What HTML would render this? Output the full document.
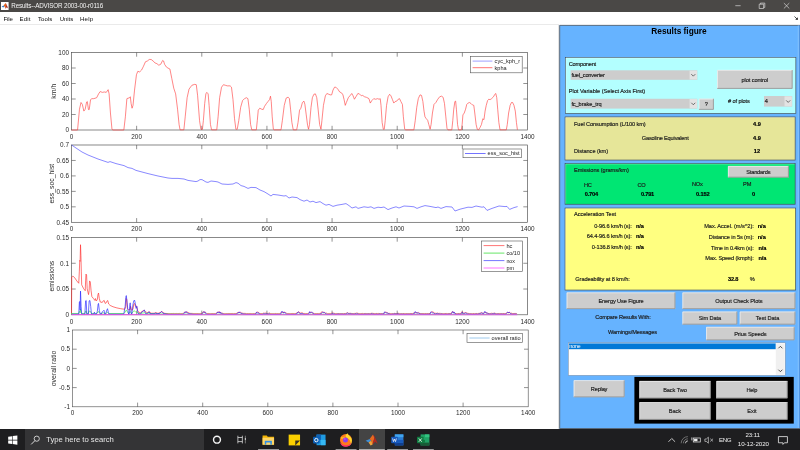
<!DOCTYPE html><html><head><meta charset="utf-8"><title>Results--ADVISOR 2003-00-r0116</title><style>
html,body{margin:0;padding:0}
body{width:800px;height:450px;position:relative;overflow:hidden;background:#fff;font-family:"Liberation Sans", sans-serif;}
#root{position:absolute;left:0;top:0;width:800px;height:450px;overflow:hidden;will-change:transform}
.abs{position:absolute;box-sizing:border-box}
.t{position:absolute;white-space:pre;line-height:1}
.k{-webkit-text-stroke:0.16px currentColor}
#titlebar{left:0;top:0;width:800px;height:11.6px;background:#4a4846}
#menubar{left:0;top:11.6px;width:800px;height:13.4px;background:#fff}
.sub{border:1px solid #5f7f9f;box-shadow:inset 0.6px 0.6px 0 rgba(255,255,255,.55)}
.btn{background:#cfcfcf;border:0.8px solid;border-color:#f4f4f4 #8a8a8a #8a8a8a #f4f4f4;}
.pop{background:#cfcfcf;}
.pop i{position:absolute;right:0;top:0;bottom:0;width:7.6px;background:#e1e1e1}
#taskbar{left:0;top:429px;width:800px;height:21px;background:#1e1e20}
</style></head><body><div id="root">
<div id="titlebar" class="abs"></div>
<div id="menubar" class="abs"></div>
<svg id="plots" width="559" height="404" viewBox="0 25 559 404" style="position:absolute;left:0;top:25px;font-family:'Liberation Sans', sans-serif;font-size:6.4px;fill:#2a2a2a"><rect x="71.5" y="52.5" width="456.0" height="77.5" fill="#fff" stroke="#4a4a4a" stroke-width="0.65"/><path d="M136.64 130v-4.2M136.64 52.5v4.2M201.79 130v-4.2M201.79 52.5v4.2M266.93 130v-4.2M266.93 52.5v4.2M332.07 130v-4.2M332.07 52.5v4.2M397.21 130v-4.2M397.21 52.5v4.2M462.36 130v-4.2M462.36 52.5v4.2M71.5 68h4.2M527.5 68h-4.2M71.5 83.5h4.2M527.5 83.5h-4.2M71.5 99h4.2M527.5 99h-4.2M71.5 114.5h4.2M527.5 114.5h-4.2" stroke="#4a4a4a" stroke-width="0.6" fill="none"/><text x="71.5" y="138.75" text-anchor="middle">0</text><text x="136.64" y="138.75" text-anchor="middle">200</text><text x="201.79" y="138.75" text-anchor="middle">400</text><text x="266.93" y="138.75" text-anchor="middle">600</text><text x="332.07" y="138.75" text-anchor="middle">800</text><text x="397.21" y="138.75" text-anchor="middle">1000</text><text x="462.36" y="138.75" text-anchor="middle">1200</text><text x="527.5" y="138.75" text-anchor="middle">1400</text><text x="69" y="54.75" text-anchor="end">100</text><text x="69" y="70.25" text-anchor="end">80</text><text x="69" y="85.75" text-anchor="end">60</text><text x="69" y="101.25" text-anchor="end">40</text><text x="69" y="116.75" text-anchor="end">20</text><text x="69" y="132.25" text-anchor="end">0</text><text transform="translate(55.6 91.25) rotate(-90)" text-anchor="middle" style="font-size:6.9px">km/h</text><path d="M71.44 130.03 L77.56 130.03 L79.47 109.19 L81 102.49 L82.34 104.41 L83.87 111.1 L85.21 109.19 L86.55 102.11 L87.31 101.54 L88.46 109.57 L89.22 109.57 L90.56 99.63 L91.9 98.67 L93.81 98.67 L96.68 97.71 L98.59 93.89 L100.12 91.59 L102.42 92.36 L104.33 91.98 L106.24 92.36 L108.15 89.68 L109.11 93.89 L110.45 113.01 L111.98 129.26 L112.93 130.03 L123.83 130.03 L125.36 116.83 L126.89 98.67 L128.23 98.1 L129.19 98.1 L130.33 96.76 L131.1 103.45 L132.05 108.23 L133.01 105.36 L134.54 90.07 L136.45 74.77 L137.79 71.33 L139.7 71.9 L141.61 69.99 L143.53 66.16 L145.44 61.77 L147.35 61 L149.26 59.47 L151.17 59.47 L153.09 61 L155 62.91 L156.91 63.68 L158.82 65.21 L160.73 64.25 L162.65 60.43 L163.6 61 L164.56 64.25 L166.47 67.12 L168 68.08 L169.91 69.03 L171.82 78.59 L173.74 88.15 L175.65 93.89 L177.56 109.19 L179.09 124.48 L180.05 129.84 L183.87 129.84 L185.21 116.83 L187.12 97.71 L189.03 89.11 L191.9 85.28 L194.77 84.33 L196.3 84.71 L197.64 95.8 L199.55 120.66 L200.89 129.26 L202.42 129.26 L203.37 120.66 L204.71 103.45 L205.86 93.89 L206.81 92.36 L208.15 93.89 L209.11 105.36 L210.45 124.48 L211.59 129.84 L216.76 129.84 L218.1 116.83 L219.63 97.71 L221.54 87.2 L223.45 84.71 L225.36 85.28 L227.27 85.86 L230.14 85.86 L231.48 87.2 L233.01 99.63 L234.54 118.75 L235.88 129.26 L237.22 129.26 L238.75 120.66 L240.66 107.27 L242.57 100.58 L244.48 98.67 L246.39 97.71 L247.92 98.67 L249.26 109.19 L250.6 124.48 L251.75 129.84 L256.34 129.84 L257.29 120.66 L258.25 110.14 L259.78 108.23 L261.69 109.19 L263.22 109.57 L264.56 106.32 L266.47 103.45 L268 101.54 L269.53 99.63 L270.49 96.18 L271.25 101.54 L272.21 116.83 L273.35 129.26 L274.12 129.84 L281 129.84 L282.34 120.66 L284.25 105.36 L286.16 98.1 L288.08 97.14 L289.41 98.67 L290.56 109.19 L291.9 122.57 L293.24 129.84 L296.68 129.84 L298.02 122.57 L299.55 110.14 L300.89 108.23 L302.42 102.49 L303.95 101.15 L304.9 104.41 L306.24 114.92 L307.58 125.44 L308.54 129.26 L309.49 124.48 L311.02 107.27 L312.36 97.71 L313.89 94.27 L315.42 93.89 L316.76 97.71 L318.1 109.19 L319.63 124.48 L320.96 129.26 L321.92 120.66 L323.45 105.36 L325.36 95.8 L326.89 93.51 L328.8 94.27 L330.14 94.85 L331.67 94.85 L333.01 90.07 L334.54 87.2 L335.88 87.2 L337.79 89.11 L339.7 91.98 L341.61 92.93 L342.95 94.85 L344.1 99.63 L345.25 105.36 L346.39 102.49 L348.31 97.71 L350.22 95.42 L351.75 93.51 L353.09 95.8 L354.42 99.24 L355.95 96.76 L357.87 93.51 L359.4 93.89 L361.31 95.8 L362.65 95.42 L364.56 96.76 L366.47 97.33 L368 98.1 L368.96 98.67 L370.29 103.07 L371.82 100.58 L373.74 98.67 L375.65 99.24 L377.56 98.67 L379.09 99.24 L380.24 98.67 L381 105.36 L382.15 122.57 L383.3 129.26 L384.25 129.26 L385.21 120.66 L386.55 105.36 L388.08 96.76 L389.61 94.27 L390.94 95.8 L392.47 99.63 L393.81 103.07 L395.15 101.54 L396.68 101.15 L398.21 99.24 L399.55 98.67 L400.89 101.54 L402.42 104.41 L403.37 116.83 L404.71 129.26 L405.67 129.84 L413.89 129.84 L415.23 120.66 L416.76 107.27 L418.29 98.67 L420.01 94.85 L421.54 95.42 L422.88 101.54 L424.02 111.1 L424.98 116.83 L426.32 118.75 L427.66 120.28 L428.8 124.48 L430.14 129.26 L431.1 124.48 L432.44 113.01 L433.97 104.41 L435.88 102.49 L437.79 99.24 L439.7 96.76 L441.61 96.18 L443.14 97.33 L444.48 103.45 L445.82 116.83 L446.97 128.31 L447.92 129.84 L448 129.84 L451.82 129.84 L452.78 120.66 L453.74 109.19 L454.88 101.54 L455.65 101.15 L456.41 109.19 L457.56 124.48 L458.52 129.84 L461.38 129.84 L462.15 124.48 L462.91 114.92 L464.25 113.01 L465.59 109.19 L466.74 104.41 L468.08 103.07 L469.41 102.49 L470.94 103.45 L472.47 104.98 L473.81 105.36 L474.77 113.01 L476.11 124.48 L477.25 129.26 L478.59 129.84 L480.12 127.35 L481.46 124.48 L482.8 118.75 L483.95 119.7 L485.09 111.1 L486.24 105.36 L487.58 100.58 L488.73 99.24 L490.07 99.63 L491.59 98.67 L493.51 96.76 L494.85 94.27 L495.8 93.51 L496.76 97.71 L497.71 109.19 L498.86 122.57 L500.01 129.84 L506.32 129.84 L507.27 124.48 L508.61 113.01 L510.14 105.36 L511.48 102.49 L512.63 102.49 L513.97 105.36 L515.3 111.1 L516.45 122.57 L517.41 129.84" stroke="#ff3b3b" stroke-width="0.62" fill="none" stroke-linejoin="round"/><rect x="470.4" y="56.3" width="51.8" height="16.5" fill="#fff" stroke="#555" stroke-width="0.6"/><path d="M472.6 61.1H492.4" stroke="#8888ff" stroke-width="0.8"/><text x="494.6" y="63.05" textLength="25.4" lengthAdjust="spacingAndGlyphs" style="font-size:5.75px;fill:#1c1c1c">cyc_kph_r</text><path d="M472.6 67.7H492.4" stroke="#ff5050" stroke-width="0.8"/><text x="494.6" y="69.65" textLength="12" lengthAdjust="spacingAndGlyphs" style="font-size:5.75px;fill:#1c1c1c">kpha</text><rect x="71.5" y="145" width="456.0" height="77.3" fill="#fff" stroke="#4a4a4a" stroke-width="0.65"/><path d="M136.64 222.3v-4.2M136.64 145v4.2M201.79 222.3v-4.2M201.79 145v4.2M266.93 222.3v-4.2M266.93 145v4.2M332.07 222.3v-4.2M332.07 145v4.2M397.21 222.3v-4.2M397.21 145v4.2M462.36 222.3v-4.2M462.36 145v4.2M71.5 160.46h4.2M527.5 160.46h-4.2M71.5 175.92h4.2M527.5 175.92h-4.2M71.5 191.38h4.2M527.5 191.38h-4.2M71.5 206.84h4.2M527.5 206.84h-4.2" stroke="#4a4a4a" stroke-width="0.6" fill="none"/><text x="71.5" y="231.05" text-anchor="middle">0</text><text x="136.64" y="231.05" text-anchor="middle">200</text><text x="201.79" y="231.05" text-anchor="middle">400</text><text x="266.93" y="231.05" text-anchor="middle">600</text><text x="332.07" y="231.05" text-anchor="middle">800</text><text x="397.21" y="231.05" text-anchor="middle">1000</text><text x="462.36" y="231.05" text-anchor="middle">1200</text><text x="527.5" y="231.05" text-anchor="middle">1400</text><text x="69" y="147.25" text-anchor="end">0.7</text><text x="69" y="162.71" text-anchor="end">0.65</text><text x="69" y="178.17" text-anchor="end">0.6</text><text x="69" y="193.63" text-anchor="end">0.55</text><text x="69" y="209.09" text-anchor="end">0.5</text><text x="69" y="224.55" text-anchor="end">0.45</text><text transform="translate(53.9 183.65) rotate(-90)" text-anchor="middle" style="font-size:6.9px">ess_soc_hist</text><path d="M71.6 145 L76 148 L82 152 L88 155 L98 159 L108 162.4 L110 161.6 L116 163.6 L124 165.6 L128 167.6 L132 168.4 L136 170.4 L148 173.6 L158 176 L168 178 L172 178.4 L178 178.4 L184 179 L188 180.4 L196 181.6 L198 181 L200 179.6 L202 179.6 L206 182 L208 182.4 L211 181 L216 181.6 L218 182 L222 184 L228 184.4 L233 184 L236 182.6 L238 183.2 L241 185.6 L244 186.4 L248 188.4 L251 187.4 L256 187.6 L260 190 L264 191.6 L268 194 L271 196 L273 194.4 L278 195 L284 196 L286 195.6 L289 198 L292 197 L297 197.6 L300 199.6 L304 201.2 L307 200 L310 202 L313 201.2 L316 202.6 L320 201.6 L323 203.6 L326 205.2 L329 204.4 L333 206.4 L337 205.2 L342 204.4 L346 203.6 L349 205.6 L352 208 L356 206.8 L358 208.4 L364 206.8 L368 207.4 L371 206.8 L374 208.4 L378 207.2 L381 207.6 L384 207 L388 209.6 L392 208 L396 206.8 L399 208 L404 206 L410 206.4 L414 206.8 L417 208.4 L421 206.8 L425 205.6 L430 206.4 L436 207.6 L438 207 L441 208.4 L446 206.6 L452 207 L455 211 L460 209.2 L468 207.2 L472 207.4 L476 206 L482 207.2 L484 206.8 L487 210.4 L492 208.4 L499 206 L505 206.6 L507 206.4 L509.6 209.4 L514 207.6 L517.6 206.6" stroke="#4040ff" stroke-width="0.62" fill="none" stroke-linejoin="round"/><rect x="463" y="149" width="58.6" height="8.7" fill="#fff" stroke="#555" stroke-width="0.6"/><path d="M465 153.5H485.6" stroke="#5050ff" stroke-width="0.8"/><text x="487.6" y="155.45" textLength="31.9" lengthAdjust="spacingAndGlyphs" style="font-size:5.75px;fill:#1c1c1c">ess_soc_hist</text><rect x="71.5" y="237.5" width="456.0" height="77.3" fill="#fff" stroke="#4a4a4a" stroke-width="0.65"/><path d="M136.64 314.8v-4.2M136.64 237.5v4.2M201.79 314.8v-4.2M201.79 237.5v4.2M266.93 314.8v-4.2M266.93 237.5v4.2M332.07 314.8v-4.2M332.07 237.5v4.2M397.21 314.8v-4.2M397.21 237.5v4.2M462.36 314.8v-4.2M462.36 237.5v4.2M71.5 263.27h4.2M527.5 263.27h-4.2M71.5 289.03h4.2M527.5 289.03h-4.2" stroke="#4a4a4a" stroke-width="0.6" fill="none"/><text x="71.5" y="323.55" text-anchor="middle">0</text><text x="136.64" y="323.55" text-anchor="middle">200</text><text x="201.79" y="323.55" text-anchor="middle">400</text><text x="266.93" y="323.55" text-anchor="middle">600</text><text x="332.07" y="323.55" text-anchor="middle">800</text><text x="397.21" y="323.55" text-anchor="middle">1000</text><text x="462.36" y="323.55" text-anchor="middle">1200</text><text x="527.5" y="323.55" text-anchor="middle">1400</text><text x="69" y="239.75" text-anchor="end">0.15</text><text x="69" y="265.52" text-anchor="end">0.1</text><text x="69" y="291.28" text-anchor="end">0.05</text><text x="69" y="317.05" text-anchor="end">0</text><text transform="translate(53.9 276.15) rotate(-90)" text-anchor="middle" style="font-size:6.9px">emissions</text><path d="M71.52 314.58 L71.72 277.01 L72.89 276.03 L74.85 277.99 L76.81 280.92 L78.76 283.27 L79.35 271.14 L79.74 260.38 L80.13 261.35 L80.52 244.72 L80.92 255.48 L81.31 271.14 L81.7 284.84 L83.66 288.75 L85.22 290.71 L85.61 280.92 L86 274.07 L86.59 275.05 L87.18 288.75 L88.55 294.62 L89.14 290.71 L89.53 280.92 L90.31 281.9 L91.09 290.71 L91.87 296.58 L93.44 298.54 L95.01 300.49 L95.4 298.54 L96.38 300.88 L97.35 299.51 L97.94 294.62 L98.53 293.06 L99.31 298.54 L100.29 302.06 L102.25 302.45 L103.23 300.88 L104.2 300.49 L105.18 303.43 L106.16 302.84 L107.14 300.88 L107.73 300.49 L108.7 304.02 L110.07 305.39 L113.01 306.76 L116.92 307.93 L120.84 308.71 L124.75 309.3 L125.73 306.36 L126.12 298.54 L126.71 299.51 L127.3 308.32 L128.67 309.89 L130.23 309.3 L130.62 306.36 L131.6 310.28 L132.97 309.3 L133.75 304.41 L134.54 303.43 L135.51 306.36 L136.49 305.97 L137.47 310.28 L138.45 312.23 L140.41 312.63 L142.36 311.26 L144.32 310.28 L145.3 311.84 L147.26 312.63 L149.21 311.84 L151.17 313.21 L154.11 313.21 L156.06 312.63 L158.02 313.41 L160.95 312.23 L161.93 311.26 L162.91 312.63 L164.87 313.41 L168.2 313.55 L168.9 313.49 L169.6 313.58 L170.3 313.66 L171 313.51 L171.7 313.55 L172.4 313.58 L173.1 313.47 L173.8 313.47 L174.5 313.65 L175.2 313.62 L175.9 313.55 L176.6 313.47 L177.3 313.66 L178 313.56 L178.7 313.56 L179.4 313.45 L180.1 313.66 L180.8 313.69 L181.5 313.62 L182.2 313.45 L182.9 313.69 L183.6 313.04 L184.3 312.36 L185 312.29 L185.7 312.14 L186.4 312.28 L187.1 311.64 L187.8 312.69 L188.5 312.67 L189.2 313.01 L189.9 313.53 L190.6 313.37 L191.3 313.38 L192 313.48 L192.7 313.44 L193.4 313.55 L194.1 313.59 L194.8 313.58 L195.5 313.54 L196.2 313.67 L196.9 313.49 L197.6 313.54 L198.3 313.63 L199 313.6 L199.7 313.66 L200.4 313.45 L201.1 313.64 L201.8 313.57 L202.5 312.89 L203.2 311.97 L203.9 311.61 L204.6 312.8 L205.3 312.03 L206 312.65 L206.7 313.4 L207.4 313.5 L208.1 313.5 L208.8 313.48 L209.5 313.57 L210.2 313.7 L210.9 313.68 L211.6 313.57 L212.3 313.54 L213 313.62 L213.7 313.6 L214.4 313.55 L215.1 313.54 L215.8 313.52 L216.5 313.08 L217.2 312.8 L217.9 311.73 L218.6 312.55 L219.3 311.94 L220 311.93 L220.7 313.05 L221.4 313.18 L222.1 313.33 L222.8 313.17 L223.5 313.57 L224.2 313.67 L224.9 313.62 L225.6 313.66 L226.3 313.6 L227 313.6 L227.7 313.6 L228.4 313.51 L229.1 313.54 L229.8 313.51 L230.5 313.52 L231.2 313.55 L231.9 313.46 L232.6 313.49 L233.3 313.69 L234 313.61 L234.7 313.45 L235.4 313.49 L236.1 313.52 L236.8 313.24 L237.5 312.87 L238.2 312.05 L238.9 312.59 L239.6 312.46 L240.3 312.08 L241 312.9 L241.7 313.23 L242.4 313.16 L243.1 313.42 L243.8 313.35 L244.5 313.39 L245.2 313.45 L245.9 313.45 L246.6 313.67 L247.3 313.53 L248 313.54 L248.7 313.67 L249.4 313.52 L250.1 313.59 L250.8 313.52 L251.5 313.61 L252.2 313.69 L252.9 313.61 L253.6 313.51 L254.3 313.63 L255 313.52 L255.7 313.51 L256.4 312.46 L257.1 312.19 L257.8 312.01 L258.5 312.39 L259.2 313.17 L259.9 313.52 L260.6 313.51 L261.3 313.58 L262 313.57 L262.7 313.46 L263.4 313.15 L264.1 313.32 L264.8 313.17 L265.5 313.13 L266.2 313.25 L266.9 313.23 L267.6 313.52 L268.3 313.4 L269 313.27 L269.7 312.88 L270.4 313.61 L271.1 313.64 L271.8 313.66 L272.5 313.66 L273.2 313.67 L273.9 313.69 L274.6 313.69 L275.3 313.46 L276 313.66 L276.7 313.69 L277.4 313.58 L278.1 313.63 L278.8 313.68 L279.5 313.7 L280.2 313.69 L280.9 312.83 L281.6 311.76 L282.3 312.46 L283 312.42 L283.7 312.41 L284.4 312.14 L285.1 312.5 L285.8 312.75 L286.5 313.24 L287.2 313.56 L287.9 313.51 L288.6 313.49 L289.3 313.59 L290 313.61 L290.7 313.67 L291.4 313.54 L292.1 313.54 L292.8 313.46 L293.5 313.5 L294.2 313.65 L294.9 313.67 L295.6 313.48 L296.3 313.34 L297 312.4 L297.7 312.47 L298.4 311.92 L299.1 312.06 L299.8 313.14 L300.5 313.11 L301.2 312.64 L301.9 313.11 L302.6 312.92 L303.3 313.41 L304 313.58 L304.7 313.47 L305.4 313.68 L306.1 313.54 L306.8 313.59 L307.5 313.63 L308.2 313.68 L308.9 312.64 L309.6 312.49 L310.3 312.2 L311 312.52 L311.7 312.56 L312.4 312.95 L313.1 313.38 L313.8 313.08 L314.5 313.66 L315.2 313.56 L315.9 313.5 L316.6 313.59 L317.3 313.5 L318 313.5 L318.7 313.63 L319.4 313.48 L320.1 313.47 L320.8 313.38 L321.5 311.89 L322.2 312.44 L322.9 311.75 L323.6 312.27 L324.3 312.54 L325 312.74 L325.7 313.24 L326.4 313.08 L327.1 313.59 L327.8 313.63 L328.5 313.6 L329.2 313.45 L329.9 313.68 L330.6 313.54 L331.3 313.35 L332 313.06 L332.7 312.97 L333.4 313.14 L334.1 313.46 L334.8 313.42 L335.5 313.57 L336.2 313.45 L336.9 313.67 L337.6 313.65 L338.3 313.64 L339 313.52 L339.7 313.51 L340.4 313.57 L341.1 313.65 L341.8 313.66 L342.5 313.63 L343.2 313.6 L343.9 313.48 L344.6 313.57 L345.3 313.59 L346 313.14 L346.7 313.1 L347.4 312.79 L348.1 313.33 L348.8 313.31 L349.5 313.34 L350.2 313.19 L350.9 313.44 L351.6 313.47 L352.3 313.65 L353 313.48 L353.7 313.57 L354.4 313.48 L355.1 313.36 L355.8 313.41 L356.5 313.1 L357.2 313.02 L357.9 313.51 L358.6 313.48 L359.3 313.55 L360 313.7 L360.7 313.6 L361.4 313.54 L362.1 313.45 L362.8 313.45 L363.5 313.59 L364.2 313.6 L364.9 313.6 L365.6 313.47 L366.3 313.64 L367 313.63 L367.7 313.65 L368.4 313.57 L369.1 313.47 L369.8 313.69 L370.5 313.48 L371.2 313.19 L371.9 313.46 L372.6 313.3 L373.3 313.45 L374 313.52 L374.7 313.59 L375.4 313.65 L376.1 313.48 L376.8 313.47 L377.5 313.49 L378.2 313.48 L378.9 313.45 L379.6 313.57 L380.3 313.55 L381 313.58 L381.7 313.58 L382.4 313.68 L383.1 313.48 L383.8 313.3 L384.5 312.82 L385.2 312.25 L385.9 312.19 L386.6 312.42 L387.3 312.76 L388 313.11 L388.7 313.44 L389.4 313.37 L390.1 313.62 L390.8 313.58 L391.5 313.65 L392.2 313.64 L392.9 313.47 L393.6 313.64 L394.3 313.37 L395 313.44 L395.7 313.5 L396.4 313.5 L397.1 313.48 L397.8 313.34 L398.5 313.34 L399.2 313.51 L399.9 313.45 L400.6 313.66 L401.3 313.66 L402 313.67 L402.7 313.6 L403.4 313.63 L404.1 313.53 L404.8 313.62 L405.5 313.6 L406.2 313.62 L406.9 313.61 L407.6 313.62 L408.3 313.63 L409 313.65 L409.7 313.55 L410.4 313.59 L411.1 313.57 L411.8 313.54 L412.5 313.66 L413.2 313.58 L413.9 312.57 L414.6 312.82 L415.3 312.77 L416 312.55 L416.7 312.65 L417.4 312.85 L418.1 312.41 L418.8 312.97 L419.5 313.28 L420.2 313.43 L420.9 313.69 L421.6 313.58 L422.3 313.51 L423 313.62 L423.7 313.55 L424.4 313.66 L425.1 313.56 L425.8 313.52 L426.5 313.63 L427.2 313.55 L427.9 313.51 L428.6 313.59 L429.3 313.52 L430 313.5 L430.7 312.78 L431.4 312.01 L432.1 311.75 L432.8 311.89 L433.5 312.14 L434.2 313.19 L434.9 313.35 L435.6 313.29 L436.3 313.37 L437 313.25 L437.7 313.06 L438.4 313.44 L439.1 313.1 L439.8 313.55 L440.5 313.41 L441.2 313.51 L441.9 313.61 L442.6 313.67 L443.3 313.61 L444 313.62 L444.7 313.63 L445.4 313.51 L446.1 313.49 L446.8 313.49 L447.5 313.7 L448.2 313.59 L448.9 313.45 L449.6 313.5 L450.3 313.49 L451 313.69 L451.7 312.6 L452.4 311.57 L453.1 312.68 L453.8 311.88 L454.5 312.68 L455.2 313.48 L455.9 313.51 L456.6 313.57 L457.3 313.67 L458 313.53 L458.7 313.49 L459.4 313.48 L460.1 313.53 L460.8 313.48 L461.5 312.29 L462.2 311.68 L462.9 312.41 L463.6 313.24 L464.3 313.07 L465 312.86 L465.7 312.67 L466.4 312.78 L467.1 313.2 L467.8 313.33 L468.5 313.45 L469.2 313.58 L469.9 313.62 L470.6 313.58 L471.3 313.68 L472 313.61 L472.7 313.68 L473.4 313.52 L474.1 313.64 L474.8 313.64 L475.5 313.66 L476.2 313.47 L476.9 313.55 L477.6 313.67 L478.3 313.5 L479 313.19 L479.7 313.33 L480.4 312.95 L481.1 313.11 L481.8 312.91 L482.5 312.84 L483.2 313.55 L483.9 312.69 L484.6 312.59 L485.3 312.09 L486 312.82 L486.7 312.95 L487.4 313.06 L488.1 313.35 L488.8 313.54 L489.5 313.54 L490.2 313.55 L490.9 313.36 L491.6 313.28 L492.3 313.41 L493 313.38 L493.7 313.3 L494.4 313.16 L495.1 313.33 L495.8 313.5 L496.5 313.69 L497.2 313.62 L497.9 313.6 L498.6 313.64 L499.3 313.49 L500 313.49 L500.7 313.6 L501.4 313.65 L502.1 313.66 L502.8 313.59 L503.5 313.5 L504.2 313.52 L504.9 313.65 L505.6 313.48 L506.3 313.11 L507 312.71 L507.7 312.54 L508.4 312.94 L509.1 312 L509.8 312.47 L510.5 313.29 L511.2 313.08 L511.9 313.43 L512.6 313.5 L513.3 313.55 L514 313.51 L514.7 313.46 L515.4 313.46 L516.1 313.49 L516.8 313.68" stroke="#ff2a2a" stroke-width="0.65" fill="none" stroke-linejoin="round"/><path d="M71.6 314.8 L71.8 313.5 L71.52 313.5 L78.76 313.5 L79.35 311.39 L79.74 311.21 L80.13 312.79 L80.52 309.34 L81.11 312.09 L81.7 313.5 L84.83 313.5 L85.61 311.1 L86.2 311.03 L86.79 313.5 L88.35 313.5 L89.14 311.1 L89.92 311.03 L90.7 312.09 L91.48 313.5 L93.44 313.5 L94.42 313.15 L95.01 313.5 L96.38 313.5 L97.35 312.97 L98.14 311.67 L98.53 311.56 L99.31 312.79 L100.29 313.5 L101.27 313.5 L102.25 313.08 L103.23 312.93 L104.01 312.79 L104.79 313.5 L105.57 313.5 L106.75 312.79 L107.53 312.51 L108.31 313.15 L109.1 313.5 L123.77 313.5 L125.14 312.09 L125.93 310.33 L126.32 310.15 L127.1 311.39 L127.88 312.79 L128.67 313.5 L129.06 313.5 L129.84 311.74 L130.23 311.46 L130.82 312.79 L131.41 313.5 L131.8 313.5 L132.97 311.74 L133.75 311.1 L134.54 310.96 L135.32 311.56 L136.1 312.44 L136.88 312.09 L137.67 312.97 L138.45 313.5 L140.41 313.5 L141.97 313.08 L143.34 312.97 L144.32 312.72 L145.3 313.22 L146.28 313.5 L147.26 313.32 L149.21 313.08 L150 313.6 L160 314 L200 314.3 L517.4 314.4" stroke="#55f055" stroke-width="0.8" fill="none"/><path d="M71.52 314.19 L78.76 314.19 L79.35 302.45 L79.74 301.47 L80.13 310.28 L80.52 291.1 L81.11 306.36 L81.7 314.19 L84.83 314.19 L85.61 300.88 L86.2 300.49 L86.79 314.19 L88.35 314.19 L89.14 300.88 L89.92 300.49 L90.7 306.36 L91.48 314.19 L93.44 314.19 L94.42 312.23 L95.01 314.19 L96.38 314.19 L97.35 311.26 L98.14 304.02 L98.53 303.43 L99.31 310.28 L100.29 314.19 L101.27 314.19 L102.25 311.84 L103.23 311.06 L104.01 310.28 L104.79 314.19 L105.57 314.19 L106.75 310.28 L107.53 308.71 L108.31 312.23 L109.1 314.19 L123.77 314.19 L125.14 306.36 L125.93 296.58 L126.32 295.6 L127.1 302.45 L127.88 310.28 L128.67 314.19 L129.06 314.19 L129.84 304.41 L130.23 302.84 L130.82 310.28 L131.41 314.19 L131.8 314.19 L132.97 304.41 L133.75 300.88 L134.54 300.1 L135.32 303.43 L136.1 308.32 L136.88 306.36 L137.67 311.26 L138.45 314.19 L140.41 314.19 L141.97 311.84 L143.34 311.26 L144.32 309.89 L145.3 312.63 L146.28 314.19 L147.26 313.21 L149.21 311.84 L150.19 313.8 L154.11 313.8 L155.67 313.02 L157.04 313.8 L159.98 313.21 L161.54 311.45 L162.91 313.21 L164.87 313.8 L168.2 314.4 L168.9 314.4 L169.6 314.4 L170.3 314.4 L171 314.4 L171.7 314.4 L172.4 314.4 L173.1 314.4 L173.8 314.4 L174.5 314.4 L175.2 314.4 L175.9 314.4 L176.6 314.4 L177.3 314.4 L178 314.4 L178.7 314.4 L179.4 314.4 L180.1 314.4 L180.8 314.4 L181.5 314.4 L182.2 314.4 L182.9 314.4 L183.6 313.82 L184.3 313.32 L185 311.79 L185.7 312.24 L186.4 311.71 L187.1 312.97 L187.8 312.97 L188.5 313.68 L189.2 313.56 L189.9 313.92 L190.6 313.93 L191.3 313.96 L192 314.2 L192.7 314.27 L193.4 314.32 L194.1 314.33 L194.8 314.39 L195.5 314.4 L196.2 314.4 L196.9 314.4 L197.6 314.4 L198.3 314.4 L199 314.4 L199.7 314.4 L200.4 314.4 L201.1 314.4 L201.8 314.4 L202.5 313.15 L203.2 312.34 L203.9 311.77 L204.6 311.78 L205.3 313.09 L206 313.24 L206.7 314.29 L207.4 314.4 L208.1 314.4 L208.8 314.4 L209.5 314.4 L210.2 314.4 L210.9 314.4 L211.6 314.4 L212.3 314.4 L213 314.4 L213.7 314.4 L214.4 314.4 L215.1 314.4 L215.8 314.4 L216.5 313.62 L217.2 312.44 L217.9 312.63 L218.6 311.78 L219.3 313.18 L220 311.97 L220.7 313.36 L221.4 312.91 L222.1 313.81 L222.8 314.15 L223.5 314.21 L224.2 314.4 L224.9 314.4 L225.6 314.4 L226.3 314.4 L227 314.4 L227.7 314.4 L228.4 314.4 L229.1 314.4 L229.8 314.4 L230.5 314.4 L231.2 314.4 L231.9 314.4 L232.6 314.4 L233.3 314.4 L234 314.4 L234.7 314.4 L235.4 314.4 L236.1 314.4 L236.8 314.05 L237.5 313.18 L238.2 312.38 L238.9 313.06 L239.6 311.85 L240.3 312.84 L241 313.61 L241.7 313.26 L242.4 313.66 L243.1 313.9 L243.8 314.16 L244.5 314.09 L245.2 314.21 L245.9 314.26 L246.6 314.4 L247.3 314.4 L248 314.4 L248.7 314.4 L249.4 314.4 L250.1 314.4 L250.8 314.4 L251.5 314.4 L252.2 314.4 L252.9 314.4 L253.6 314.4 L254.3 314.4 L255 314.4 L255.7 314.4 L256.4 312.3 L257.1 312.68 L257.8 313.04 L258.5 312.8 L259.2 314.01 L259.9 314.33 L260.6 314.4 L261.3 314.4 L262 314.4 L262.7 314.4 L263.4 313.78 L264.1 314 L264.8 313.84 L265.5 313.86 L266.2 313.79 L266.9 313.9 L267.6 313.93 L268.3 314.17 L269 313.9 L269.7 313.72 L270.4 314.4 L271.1 314.4 L271.8 314.4 L272.5 314.4 L273.2 314.4 L273.9 314.4 L274.6 314.4 L275.3 314.4 L276 314.4 L276.7 314.4 L277.4 314.4 L278.1 314.4 L278.8 314.4 L279.5 314.4 L280.2 314.4 L280.9 313.9 L281.6 311.65 L282.3 311.71 L283 311.7 L283.7 313.19 L284.4 312.1 L285.1 312.88 L285.8 313.52 L286.5 314.11 L287.2 314.22 L287.9 314.4 L288.6 314.4 L289.3 314.4 L290 314.4 L290.7 314.4 L291.4 314.4 L292.1 314.4 L292.8 314.4 L293.5 314.4 L294.2 314.4 L294.9 314.4 L295.6 314.4 L296.3 314.22 L297 313 L297.7 312.83 L298.4 311.9 L299.1 312.43 L299.8 313.52 L300.5 313.72 L301.2 313.69 L301.9 313.39 L302.6 313.6 L303.3 314.11 L304 314.4 L304.7 314.4 L305.4 314.4 L306.1 314.4 L306.8 314.4 L307.5 314.4 L308.2 314.4 L308.9 313.73 L309.6 311.64 L310.3 312.84 L311 312.75 L311.7 311.8 L312.4 312.62 L313.1 313.69 L313.8 313.87 L314.5 314.29 L315.2 314.4 L315.9 314.4 L316.6 314.4 L317.3 314.4 L318 314.4 L318.7 314.4 L319.4 314.4 L320.1 314.4 L320.8 314.01 L321.5 313.09 L322.2 312.42 L322.9 311.95 L323.6 312.83 L324.3 312.41 L325 313 L325.7 313.58 L326.4 314.05 L327.1 314.32 L327.8 314.4 L328.5 314.4 L329.2 314.4 L329.9 314.4 L330.6 314.4 L331.3 314.13 L332 313.9 L332.7 313.4 L333.4 313.96 L334.1 313.82 L334.8 314.2 L335.5 314.4 L336.2 314.36 L336.9 314.35 L337.6 314.08 L338.3 314.05 L339 314.07 L339.7 314.39 L340.4 314.2 L341.1 314.21 L341.8 314.07 L342.5 314.11 L343.2 314.38 L343.9 314.36 L344.6 314.05 L345.3 314.37 L346 313.68 L346.7 313.62 L347.4 312.97 L348.1 313.56 L348.8 313.74 L349.5 313.77 L350.2 313.71 L350.9 313.82 L351.6 314.07 L352.3 314.06 L353 314.09 L353.7 314.27 L354.4 314.27 L355.1 313.82 L355.8 313.79 L356.5 313.98 L357.2 313.61 L357.9 313.96 L358.6 314.27 L359.3 314.33 L360 314.39 L360.7 314.34 L361.4 314.25 L362.1 314.3 L362.8 314.25 L363.5 314.4 L364.2 314.11 L364.9 314.09 L365.6 314.18 L366.3 314.2 L367 314.1 L367.7 314.17 L368.4 314.09 L369.1 314.28 L369.8 314.14 L370.5 314.29 L371.2 313.75 L371.9 313.72 L372.6 314.05 L373.3 314.05 L374 314.3 L374.7 314.36 L375.4 314.31 L376.1 314.11 L376.8 314.13 L377.5 314.38 L378.2 314.2 L378.9 314.32 L379.6 313.94 L380.3 314.28 L381 314.22 L381.7 314.1 L382.4 314.11 L383.1 314.21 L383.8 313.95 L384.5 311.95 L385.2 311.95 L385.9 312.71 L386.6 313.01 L387.3 313.08 L388 313.1 L388.7 313.87 L389.4 313.85 L390.1 314.38 L390.8 314.36 L391.5 314.31 L392.2 314.22 L392.9 314.12 L393.6 314.15 L394.3 313.83 L395 314 L395.7 314.02 L396.4 314.07 L397.1 313.85 L397.8 313.94 L398.5 313.87 L399.2 314.38 L399.9 314.33 L400.6 314.23 L401.3 314.17 L402 314.18 L402.7 314.37 L403.4 314.05 L404.1 314.4 L404.8 314.39 L405.5 314.36 L406.2 314.24 L406.9 314.24 L407.6 314.25 L408.3 314.21 L409 314.39 L409.7 314.31 L410.4 314.14 L411.1 314.38 L411.8 314.08 L412.5 314.36 L413.2 314.05 L413.9 313.27 L414.6 313.21 L415.3 311.52 L416 312.69 L416.7 312.94 L417.4 313.09 L418.1 312.55 L418.8 313.53 L419.5 313.51 L420.2 314.04 L420.9 314.24 L421.6 314.14 L422.3 314.27 L423 314.23 L423.7 314.32 L424.4 314.34 L425.1 314.31 L425.8 314.25 L426.5 314.27 L427.2 314.32 L427.9 314.15 L428.6 314.27 L429.3 314.26 L430 314.33 L430.7 312.12 L431.4 311.74 L432.1 312.57 L432.8 313.07 L433.5 312.96 L434.2 313.67 L434.9 313.86 L435.6 314.05 L436.3 313.61 L437 313.67 L437.7 313.73 L438.4 313.86 L439.1 313.8 L439.8 314.13 L440.5 314.18 L441.2 314.05 L441.9 314.09 L442.6 314.19 L443.3 314.39 L444 314.29 L444.7 314.26 L445.4 314.13 L446.1 314.36 L446.8 314.27 L447.5 314.27 L448.2 314.23 L448.9 314.15 L449.6 314.1 L450.3 314.37 L451 314.09 L451.7 313.34 L452.4 311.78 L453.1 311.63 L453.8 313.21 L454.5 312.44 L455.2 314.12 L455.9 314.14 L456.6 314.4 L457.3 314.32 L458 314.24 L458.7 314.14 L459.4 314.32 L460.1 314.26 L460.8 314.26 L461.5 313.35 L462.2 312.19 L462.9 312.98 L463.6 313.69 L464.3 313.42 L465 313.34 L465.7 312.89 L466.4 313.2 L467.1 313.97 L467.8 314.2 L468.5 314.05 L469.2 314.13 L469.9 314.38 L470.6 314.18 L471.3 314.22 L472 314.27 L472.7 314.39 L473.4 314.2 L474.1 314.38 L474.8 314.35 L475.5 314.11 L476.2 314.15 L476.9 314.07 L477.6 314.31 L478.3 314.1 L479 313.74 L479.7 313.7 L480.4 313.6 L481.1 313.06 L481.8 312.68 L482.5 313.31 L483.2 314.22 L483.9 313.17 L484.6 311.52 L485.3 311.73 L486 313.17 L486.7 312.89 L487.4 313.02 L488.1 313.8 L488.8 313.93 L489.5 314.14 L490.2 314.09 L490.9 314.04 L491.6 314 L492.3 313.85 L493 313.77 L493.7 313.83 L494.4 313.38 L495.1 313.92 L495.8 314.13 L496.5 314.2 L497.2 314.09 L497.9 314.28 L498.6 314.06 L499.3 314.36 L500 314.28 L500.7 314.18 L501.4 314.06 L502.1 314.12 L502.8 314.34 L503.5 314.11 L504.2 314.32 L504.9 314.29 L505.6 314.37 L506.3 313.52 L507 312.59 L507.7 311.99 L508.4 312.87 L509.1 312.04 L509.8 312.69 L510.5 313.62 L511.2 313.9 L511.9 313.97 L512.6 314.31 L513.3 314.12 L514 314.32 L514.7 314.08 L515.4 314.11 L516.1 314.16 L516.8 314.09" stroke="#2020ff" stroke-width="0.65" fill="none" stroke-linejoin="round"/><path d="M71.6 314.7H517.4" stroke="#f050f0" stroke-width="0.9" fill="none"/><rect x="481.6" y="241" width="40.8" height="30.6" fill="#fff" stroke="#555" stroke-width="0.6"/><path d="M483.6 245.6H504.4" stroke="#ff5050" stroke-width="0.8"/><text x="506.4" y="247.55" textLength="6" lengthAdjust="spacingAndGlyphs" style="font-size:5.75px;fill:#1c1c1c">hc</text><path d="M483.6 253.1H504.4" stroke="#40e040" stroke-width="0.8"/><text x="506.4" y="255.05" textLength="13.6" lengthAdjust="spacingAndGlyphs" style="font-size:5.75px;fill:#1c1c1c">co/10</text><path d="M483.6 260.6H504.4" stroke="#5050ff" stroke-width="0.8"/><text x="506.4" y="262.55" textLength="8.6" lengthAdjust="spacingAndGlyphs" style="font-size:5.75px;fill:#1c1c1c">nox</text><path d="M483.6 268H504.4" stroke="#ff50ff" stroke-width="0.8"/><text x="506.4" y="269.95" textLength="7.6" lengthAdjust="spacingAndGlyphs" style="font-size:5.75px;fill:#1c1c1c">pm</text><g><rect x="72.5" y="330" width="455.7" height="76.8" fill="#fff" stroke="#4a4a4a" stroke-width="0.6"/><path d="M137.6 406.8v-4.2M137.6 330v4.2M202.7 406.8v-4.2M202.7 330v4.2M267.8 406.8v-4.2M267.8 330v4.2M332.9 406.8v-4.2M332.9 330v4.2M398 406.8v-4.2M398 330v4.2M463.1 406.8v-4.2M463.1 330v4.2M72.5 349.2h4.2M528.2 349.2h-4.2M72.5 368.4h4.2M528.2 368.4h-4.2M72.5 387.6h4.2M528.2 387.6h-4.2" stroke="#4a4a4a" stroke-width="0.6" fill="none"/><text x="72.5" y="415.4" text-anchor="middle">0</text><text x="137.6" y="415.4" text-anchor="middle">200</text><text x="202.7" y="415.4" text-anchor="middle">400</text><text x="267.8" y="415.4" text-anchor="middle">600</text><text x="332.9" y="415.4" text-anchor="middle">800</text><text x="398" y="415.4" text-anchor="middle">1000</text><text x="463.1" y="415.4" text-anchor="middle">1200</text><text x="528.2" y="415.4" text-anchor="middle">1400</text><text x="70" y="332.25" text-anchor="end">1</text><text x="70" y="351.45" text-anchor="end">0.5</text><text x="70" y="370.65" text-anchor="end">0</text><text x="70" y="389.85" text-anchor="end">-0.5</text><text x="70" y="409.05" text-anchor="end">-1</text><text transform="translate(56 368.4) rotate(-90)" text-anchor="middle" style="font-size:6.9px">overall ratio</text></g><rect x="467" y="333.5" width="55.5" height="9.1" fill="#fff" stroke="#555" stroke-width="0.6"/><path d="M469.4 338H489.6" stroke="#86bde8" stroke-width="0.8"/><text x="491.6" y="339.95" textLength="29.1" lengthAdjust="spacingAndGlyphs" style="font-size:5.75px;fill:#1c1c1c">overall ratio</text></svg>
<div class="abs" style="left:0;top:24px;width:559px;height:1px;background:#eaeaea"></div>
<div class="abs" style="left:558px;top:25px;width:1px;height:404px;background:#e2e2e2"></div>
<svg id="panel" class="abs" style="left:556px;top:22px" width="244" height="408" viewBox="556 22 244 408"><rect x="559.3" y="25" width="241" height="404" fill="#66b3ff"/><path d="M559.7 428.2V25.35H800" stroke="#5a5a5a" stroke-width="0.8" fill="none"/><path d="M559.4 428.5H800" stroke="#55606c" stroke-width="0.9" fill="none"/><rect x="797.8" y="25.5" width="1.1" height="402.500" fill="#86c4ff"/><rect x="798.900" y="25.500" width="1.1" height="402.500" fill="#4f93e0"/><rect x="565.35" y="57.35" width="230.5" height="56.3" fill="#b3ffff" stroke="#44505c" stroke-width="0.7"/><path d="M566 113.1V58H795.3" stroke="#fff" stroke-opacity="0.55" stroke-width="0.5" fill="none"/><rect x="570.6" y="70.3" width="126.7" height="9.5" fill="#cdcdcd"/><rect x="689.6" y="70.6" width="7.4" height="8.9" fill="#e3e3e3"/><path d="M691.3 74.15L693.3 76.15L695.3 74.15" stroke="#3a3a3a" stroke-width="0.7" fill="none"/><rect x="570.6" y="98.75" width="126.7" height="9.85" fill="#cdcdcd"/><rect x="689.6" y="99.05" width="7.4" height="9.25" fill="#e3e3e3"/><path d="M691.3 102.77L693.3 104.77L695.3 102.77" stroke="#3a3a3a" stroke-width="0.7" fill="none"/><rect x="698.9" y="98.75" width="14.85" height="10.95" fill="#cdcdcd"/><path d="M699.2 109.7V99.05H713.75" stroke="#fafafa" stroke-width="0.6" fill="none"/><path d="M698.9 109.35H713.4V98.75" stroke="#8a8a8a" stroke-width="0.7" fill="none"/><rect x="717.2" y="70" width="75.3" height="18.75" fill="#cdcdcd"/><path d="M717.5 88.75V70.3H792.5" stroke="#fafafa" stroke-width="0.6" fill="none"/><path d="M717.2 88.4H792.15V70" stroke="#8a8a8a" stroke-width="0.7" fill="none"/><rect x="764" y="96" width="28.2" height="10.6" fill="#cdcdcd"/><rect x="784.5" y="96.3" width="7.4" height="10" fill="#e3e3e3"/><path d="M786.2 100.4L788.2 102.4L790.2 100.4" stroke="#3a3a3a" stroke-width="0.7" fill="none"/><rect x="565.05" y="116.95" width="230.1" height="43.1" fill="#e6e699" stroke="#44505c" stroke-width="0.7"/><path d="M565.7 159.5V117.6H794.6" stroke="#fff" stroke-opacity="0.55" stroke-width="0.5" fill="none"/><rect x="565.05" y="163.45" width="230.1" height="40.8" fill="#00e673" stroke="#44505c" stroke-width="0.7"/><path d="M565.7 203.7V164.1H794.6" stroke="#fff" stroke-opacity="0.55" stroke-width="0.5" fill="none"/><rect x="728" y="166" width="60.75" height="11.5" fill="#cdcdcd"/><path d="M728.3 177.5V166.3H788.75" stroke="#fafafa" stroke-width="0.6" fill="none"/><path d="M728 177.15H788.4V166" stroke="#8a8a8a" stroke-width="0.7" fill="none"/><rect x="565.05" y="208.05" width="230.6" height="82" fill="#ffff80" stroke="#44505c" stroke-width="0.7"/><path d="M565.7 289.5V208.7H795.1" stroke="#fff" stroke-opacity="0.55" stroke-width="0.5" fill="none"/><rect x="566.7" y="292.5" width="108.6" height="16.5" fill="#cdcdcd"/><path d="M567 309V292.8H675.3" stroke="#fafafa" stroke-width="0.6" fill="none"/><path d="M566.7 308.65H674.95V292.5" stroke="#8a8a8a" stroke-width="0.7" fill="none"/><rect x="682.5" y="292.5" width="112.8" height="16.5" fill="#cdcdcd"/><path d="M682.8 309V292.8H795.3" stroke="#fafafa" stroke-width="0.6" fill="none"/><path d="M682.5 308.65H794.95V292.5" stroke="#8a8a8a" stroke-width="0.7" fill="none"/><rect x="682.5" y="311.6" width="54.7" height="12.9" fill="#cdcdcd"/><path d="M682.8 324.5V311.9H737.2" stroke="#fafafa" stroke-width="0.6" fill="none"/><path d="M682.5 324.15H736.85V311.6" stroke="#8a8a8a" stroke-width="0.7" fill="none"/><rect x="739.8" y="311.6" width="55.5" height="12.9" fill="#cdcdcd"/><path d="M740.1 324.5V311.9H795.3" stroke="#fafafa" stroke-width="0.6" fill="none"/><path d="M739.8 324.15H794.95V311.6" stroke="#8a8a8a" stroke-width="0.7" fill="none"/><rect x="706.25" y="326.9" width="88.25" height="13.3" fill="#cdcdcd"/><path d="M706.55 340.2V327.2H794.5" stroke="#fafafa" stroke-width="0.6" fill="none"/><path d="M706.25 339.85H794.15V326.9" stroke="#8a8a8a" stroke-width="0.7" fill="none"/><rect x="568.3" y="342.8" width="216.9" height="32.5" fill="#fff" stroke="#7a8aa0" stroke-width="0.5"/><rect x="569" y="343.4" width="206.8" height="5.8" fill="#0078d7" /><rect x="775.8" y="343.4" width="8.9" height="31.4" fill="#f0f0f0" /><path d="M778.4 348.3L780.4 346.3L782.4 348.3M778.4 369.7L780.4 371.7L782.4 369.700" stroke="#222" stroke-width="0.800" fill="none"/><rect x="573.75" y="380.3" width="50.75" height="16.9" fill="#cdcdcd"/><path d="M574.05 397.2V380.6H624.5" stroke="#fafafa" stroke-width="0.6" fill="none"/><path d="M573.75 396.85H624.15V380.3" stroke="#8a8a8a" stroke-width="0.7" fill="none"/><rect x="634.4" y="376.9" width="159.35" height="46.7" fill="#000" /><rect x="639.4" y="381" width="71.2" height="17.3" fill="#cdcdcd"/><path d="M639.7 398.3V381.3H710.6" stroke="#fafafa" stroke-width="0.6" fill="none"/><path d="M639.4 397.95H710.25V381" stroke="#8a8a8a" stroke-width="0.7" fill="none"/><rect x="716.4" y="381" width="71.1" height="17.3" fill="#cdcdcd"/><path d="M716.7 398.3V381.3H787.5" stroke="#fafafa" stroke-width="0.6" fill="none"/><path d="M716.4 397.95H787.15V381" stroke="#8a8a8a" stroke-width="0.7" fill="none"/><rect x="639.4" y="402.2" width="71.2" height="17.5" fill="#cdcdcd"/><path d="M639.7 419.7V402.5H710.6" stroke="#fafafa" stroke-width="0.6" fill="none"/><path d="M639.4 419.35H710.25V402.2" stroke="#8a8a8a" stroke-width="0.7" fill="none"/><rect x="716.4" y="402.2" width="71.1" height="17.5" fill="#cdcdcd"/><path d="M716.7 419.7V402.5H787.5" stroke="#fafafa" stroke-width="0.6" fill="none"/><path d="M716.4 419.35H787.15V402.2" stroke="#8a8a8a" stroke-width="0.7" fill="none"/></svg>
<svg class="abs" style="left:1.2px;top:1.8px" width="7.6" height="8" viewBox="0 0 7.6 8"><rect width="7.6" height="8" fill="#fff"/><path d="M0.6 4.6L2.6 3.6L3.6 4.6L2.2 5.6Z" fill="#2f7fd0"/><path d="M2.6 3.6L4.6 1L5.4 3L4.4 6.8L3.6 4.6Z" fill="#e2621d"/><path d="M4.6 1L5.6 2.4L7.2 6.4L5.8 5.2L4.4 6.8L5.4 3Z" fill="#a3201c"/></svg>
<svg class="abs" style="left:730px;top:0" width="70" height="11.6" viewBox="730 0 70 11.6"><path d="M735.3 5.7H740.6" stroke="#eee" stroke-width="0.6"/><path d="M759.2 4.2h4.4v4.3h-4.4zM760.4 4.2V3.1h4.4v4.3h-1.2" stroke="#eee" stroke-width="0.6" fill="none"/><path d="M783.9 3.1L789.3 8.5M789.3 3.1L783.9 8.5" stroke="#eee" stroke-width="0.6"/></svg>
<svg class="abs" style="left:794px;top:16px" width="4.4" height="4.4" viewBox="0 0 4.4 4.4"><path d="M0.5 0.5L3.4 3.4" stroke="#222" stroke-width="0.8"/><path d="M1.2 3.8H3.8V1.2Z" fill="#222"/></svg>
<div id="taskbar" class="abs"></div>
<div class="abs" style="left:25px;top:429px;width:179px;height:21px;background:#343436"></div>
<div class="abs" style="left:359px;top:429px;width:26px;height:21px;background:#444"></div>
<svg class="abs" style="left:0;top:428.600px" width="800" height="21.400" viewBox="0 428.600 800 21.400"><path d="M8 436.3L11.9 435.75V439.4H8ZM12.5 435.67L17.2 435V439.4H12.5ZM8 440H11.9V443.65L8 443.1ZM12.5 440H17.2V444.4L12.5 443.73Z" fill="#fff"/><circle cx="36.6" cy="438.3" r="2.6" stroke="#eee" stroke-width="0.8" fill="none"/><path d="M34.7 440.3L31 444" stroke="#eee" stroke-width="0.9"/><circle cx="216.9" cy="439.3" r="3.45" stroke="#f4f4f4" stroke-width="1.45" fill="none"/><path d="M237.8 435.3V443M242.3 435.3V443M237.8 437.1H242.3M237.8 441.2H242.3" stroke="#e4e4e4" stroke-width="0.75" fill="none"/><path d="M245.3 435.3V443" stroke="#9a9a9a" stroke-width="0.7"/><circle cx="245.3" cy="438.6" r="0.65" fill="#fff"/><path d="M262.5 435.2h4.2l1 1.1h6.3v8h-11.5z" fill="#f4b400"/><path d="M262.5 437.3h11.5v7h-11.5z" fill="#ffd566"/><path d="M264.7 440.4h7.1v3.9h-7.1z" fill="#2f8fe8"/><path d="M266.2 442.1h4.1v2.2h-4.1z" fill="#ffd566"/><path d="M288.6 434.2h11.4v10.8h-11.4z" fill="#fbd000"/><path d="M295.2 445L300 440.2h-4.8z" fill="#3a3320"/><path d="M316.5 434.2h9v10.6h-9z" fill="#1f9be3"/><path d="M316.5 434.2h4.5v5.3h-4.5z" fill="#0f63b8"/><path d="M321 439.5h4.5v5.3h-4.5z" fill="#36b9f5"/><rect x="313" y="436.4" width="6.6" height="6.6" rx="0.8" fill="#0c5fb5"/><circle cx="316.3" cy="439.7" r="1.7" stroke="#fff" stroke-width="0.9" fill="none"/><circle cx="345.9" cy="439.6" r="6" fill="#ff7a1a"/><path d="M340 441.4a6 6 0 0 0 11.8 0a6.4 6.4 0 0 1-11.8 0z" fill="#ff3a5e"/><path d="M340.2 442a6 6 0 0 0 11.4 .2q-2.600 3.2-6 2.600q-3.600-.4-5.400-2.800z" fill="#ff3563"/><path d="M345.600 435.2q.8-1.800 2-2.400q.2 1.400 1.400 2.400q2.800 2.200 2.900 5q.1 2.600-1.700 4.300q1-2.400-.2-4.400q-1-1.800-3-2.400q-1.600-.5-1.400-2.500z" fill="#ffd92e"/><path d="M340.800 436.400q1.200-.2 2 .5q1.400-1 3-.7q-1.400 .800-1.600 2.100l-2.800 .4q-1-.9-.6-2.300z" fill="#ffb21f"/><circle cx="345.500" cy="439.600" r="2.500" fill="#8a3ff0"/><circle cx="344.700" cy="438.700" r="1.100" fill="#c04be8"/><path d="M365.6 440.4L369.6 438.6L371.2 440.2L368.6 442Z" fill="#3f8fd6"/><path d="M369.600 438.6L373 434L374.4 437.400L372.600 444.2L371.2 440.2Z" fill="#e8691f"/><path d="M373 434L374.6 436L377.700 443.4L375.2 441.4L372.600 444.2L374.4 437.400Z" fill="#b3261e"/><path d="M368.600 442L371.2 440.2L372.600 444.2L370.6 445Z" fill="#f2a23a"/><path d="M394.8 434h8.600v11h-8.600z" fill="#2b7cd3"/><path d="M394.8 434h8.600v2.800h-8.600z" fill="#41a5ee"/><path d="M394.8 442.2h8.600v2.800h-8.600z" fill="#103f91"/><path d="M394.8 439.500h8.600v2.700h-8.600z" fill="#185abd"/><rect x="391.2" y="436.3" width="6.600" height="6.600" rx="0.700" fill="#185abd"/><path d="M392.6 438L393.500 441.2L394.500 438.600L395.500 441.2L396.400 438" stroke="#fff" stroke-width="0.700" fill="none"/><path d="M420.600 434h8.800v11h-8.800z" fill="#21a366"/><path d="M425 434h4.400v2.800h-4.400z" fill="#33c481"/><path d="M420.600 442.2h8.800v2.800h-8.800z" fill="#185c37"/><path d="M420.600 439.500h4.400v2.700h-4.400z" fill="#107c41"/><rect x="417" y="436.3" width="6.600" height="6.600" rx="0.700" fill="#107c41"/><path d="M418.800 438L421.800 441.400M421.800 438L418.800 441.400" stroke="#fff" stroke-width="0.800"/><rect x="258" y="448.8" width="21" height="1.2" fill="#b8b8b8"/><rect x="335.6" y="448.8" width="20.9" height="1.2" fill="#b8b8b8"/><rect x="359" y="448.8" width="25.8" height="1.2" fill="#c4c4c4"/><rect x="387.2" y="448.8" width="20.8" height="1.2" fill="#b8b8b8"/><rect x="413" y="448.8" width="20.8" height="1.2" fill="#b8b8b8"/><path d="M668.6 441.400L671.900 438.100L675.200 441.400" stroke="#eee" stroke-width="0.800" fill="none"/><path d="M681.300 442.900A6.700 6.700 0 0 1 688 436.200M683.500 442.900A4.500 4.500 0 0 1 688 438.400" stroke="#8c8c8c" stroke-width="0.700" fill="none"/><path d="M685.600 442.900A2.400 2.400 0 0 1 688 440.500" stroke="#e8e8e8" stroke-width="0.800" fill="none"/><rect x="693.400" y="437.600" width="7" height="4" stroke="#eee" stroke-width="0.700" fill="none"/><rect x="694.2" y="438.400" width="3.400" height="2.400" fill="#eee"/><path d="M692 437v3" stroke="#eee" stroke-width="0.800"/><path d="M705 438.600h1.500l2-1.800v6l-2-1.800h-1.500z" stroke="#eee" stroke-width="0.600" fill="none"/><path d="M710.400 438.300L713.200 441.100M713.200 438.300L710.400 441.100" stroke="#eee" stroke-width="0.600"/><path d="M778.600 436.200h9v6.200h-3l-1.500 1.600v-1.600h-4.500z" stroke="#eee" stroke-width="0.800" fill="none"/></svg>
<span class="t" style="left:651.34px;top:27.27px;font-size:8.3px;color:#000;font-weight:700">Results figure</span>
<span class="t k" style="left:568.75px;top:61.52px;font-size:5.65px;color:#1a1a1a;letter-spacing:-0.219px">Component</span>
<span class="t k" style="left:571.4px;top:73.17px;font-size:5.65px;color:#1a1a1a;letter-spacing:-0.175px">fuel_converter</span>
<span class="t k" style="left:568.75px;top:88.72px;font-size:5.65px;color:#1a1a1a;letter-spacing:-0.016px">Plot Variable (Select Axis First)</span>
<span class="t k" style="left:571.4px;top:101.79px;font-size:5.65px;color:#1a1a1a;letter-spacing:-0.097px">fc_brake_trq</span>
<span class="t k" style="left:704.75px;top:102.44px;font-size:5.65px;color:#1a1a1a">?</span>
<span class="t k" style="left:741.51px;top:77.59px;font-size:5.65px;color:#1a1a1a;letter-spacing:-0.083px">plot control</span>
<span class="t k" style="left:728px;top:99.02px;font-size:5.65px;color:#1a1a1a;letter-spacing:-0.119px"># of plots</span>
<span class="t k" style="left:764.8px;top:99.42px;font-size:5.65px;color:#1a1a1a">4</span>
<span class="t k" style="left:574px;top:121.52px;font-size:5.65px;color:#1a1a1a;letter-spacing:-0.100px">Fuel Consumption (L/100 km)</span>
<span class="t k" style="left:641.7px;top:135.62px;font-size:5.65px;color:#1a1a1a;letter-spacing:-0.167px">Gasoline Equivalent</span>
<span class="t k" style="left:574px;top:148.72px;font-size:5.65px;color:#1a1a1a;letter-spacing:-0.061px">Distance (km)</span>
<span class="t k" style="left:753.08px;top:121.52px;font-size:5.65px;color:#000;font-weight:700">4.9</span>
<span class="t k" style="left:753.08px;top:135.62px;font-size:5.65px;color:#000;font-weight:700">4.9</span>
<span class="t k" style="left:753.86px;top:148.72px;font-size:5.65px;color:#000;font-weight:700">12</span>
<span class="t k" style="left:574px;top:168.42px;font-size:5.65px;color:#1a1a1a;letter-spacing:-0.052px">Emissions (grams/km)</span>
<span class="t k" style="left:746.19px;top:169.97px;font-size:5.65px;color:#1a1a1a;letter-spacing:-0.169px">Standards</span>
<span class="t k" style="left:583.9px;top:182.62px;font-size:5.65px;color:#1a1a1a;letter-spacing:-0.178px">HC</span>
<span class="t k" style="left:637.5px;top:182.62px;font-size:5.65px;color:#1a1a1a;letter-spacing:-0.334px">CO</span>
<span class="t k" style="left:691.9px;top:182.22px;font-size:5.65px;color:#1a1a1a;letter-spacing:-0.132px">NOx</span>
<span class="t k" style="left:743px;top:182.22px;font-size:5.65px;color:#1a1a1a;letter-spacing:-0.109px">PM</span>
<span class="t k" style="left:584.7px;top:192.47px;font-size:5.65px;color:#000;font-weight:700;letter-spacing:-0.165px">0.704</span>
<span class="t k" style="left:641px;top:192.47px;font-size:5.65px;color:#000;font-weight:700;letter-spacing:-0.225px">0.791</span>
<span class="t k" style="left:696px;top:192.47px;font-size:5.65px;color:#000;font-weight:700;letter-spacing:-0.145px">0.152</span>
<span class="t k" style="left:751.9px;top:192.47px;font-size:5.65px;color:#000;font-weight:700">0</span>
<span class="t k" style="left:574px;top:211.82px;font-size:5.65px;color:#1a1a1a;letter-spacing:-0.051px">Acceleration Test</span>
<span class="t k" style="left:594.36px;top:223.82px;font-size:5.65px;color:#1a1a1a;letter-spacing:-0.138px">0-96.6 km/h (s):</span>
<span class="t k" style="left:635.9px;top:223.82px;font-size:5.65px;color:#000;font-weight:700;letter-spacing:-0.119px">n/a</span>
<span class="t k" style="left:586.77px;top:234.32px;font-size:5.65px;color:#1a1a1a;letter-spacing:-0.129px">64.4-96.6 km/h (s):</span>
<span class="t k" style="left:635.9px;top:234.32px;font-size:5.65px;color:#000;font-weight:700;letter-spacing:-0.119px">n/a</span>
<span class="t k" style="left:591.83px;top:244.92px;font-size:5.65px;color:#1a1a1a;letter-spacing:-0.167px">0-136.8 km/h (s):</span>
<span class="t k" style="left:635.9px;top:244.92px;font-size:5.65px;color:#000;font-weight:700;letter-spacing:-0.119px">n/a</span>
<span class="t k" style="left:704.15px;top:223.92px;font-size:5.65px;color:#1a1a1a;letter-spacing:-0.050px">Max. Accel. (m/s^2):</span>
<span class="t k" style="left:757.7px;top:223.92px;font-size:5.65px;color:#000;font-weight:700;letter-spacing:-0.019px">n/a</span>
<span class="t k" style="left:708.79px;top:234.82px;font-size:5.65px;color:#1a1a1a;letter-spacing:-0.112px">Distance in 5s (m):</span>
<span class="t k" style="left:757.7px;top:234.82px;font-size:5.65px;color:#000;font-weight:700;letter-spacing:-0.019px">n/a</span>
<span class="t k" style="left:711.07px;top:245.72px;font-size:5.65px;color:#1a1a1a;letter-spacing:-0.129px">Time in 0.4km (s):</span>
<span class="t k" style="left:758.4px;top:245.72px;font-size:5.65px;color:#000;font-weight:700;letter-spacing:-0.019px">n/a</span>
<span class="t k" style="left:705.36px;top:255.62px;font-size:5.65px;color:#1a1a1a;letter-spacing:-0.139px">Max. Speed (kmph):</span>
<span class="t k" style="left:758.4px;top:255.62px;font-size:5.65px;color:#000;font-weight:700;letter-spacing:-0.019px">n/a</span>
<span class="t k" style="left:575.3px;top:277.47px;font-size:5.65px;color:#1a1a1a;letter-spacing:-0.089px">Gradeability at 8 km/h:</span>
<span class="t k" style="left:728px;top:277.47px;font-size:5.65px;color:#000;font-weight:700;letter-spacing:-0.171px">32.8</span>
<span class="t k" style="left:749.7px;top:277.47px;font-size:5.65px;color:#1a1a1a">%</span>
<span class="t k" style="left:598.44px;top:298.97px;font-size:5.65px;color:#1a1a1a;letter-spacing:-0.119px">Energy Use Figure</span>
<span class="t k" style="left:715.17px;top:298.97px;font-size:5.65px;color:#1a1a1a;letter-spacing:-0.067px">Output Check Plots</span>
<span class="t k" style="left:595.3px;top:314.57px;font-size:5.65px;color:#1a1a1a;letter-spacing:-0.129px">Compare Results With:</span>
<span class="t k" style="left:698.64px;top:316.27px;font-size:5.65px;color:#1a1a1a;letter-spacing:-0.113px">Sim Data</span>
<span class="t k" style="left:755.83px;top:316.27px;font-size:5.65px;color:#1a1a1a;letter-spacing:-0.048px">Test Data</span>
<span class="t k" style="left:608px;top:329.62px;font-size:5.65px;color:#1a1a1a;letter-spacing:-0.111px">Warnings/Messages</span>
<span class="t k" style="left:734.17px;top:331.77px;font-size:5.65px;color:#1a1a1a;letter-spacing:-0.105px">Prius Speeds</span>
<span class="t" style="left:569.3px;top:343.62px;font-size:5.65px;color:#fff;letter-spacing:-0.441px">none</span>
<span class="t k" style="left:590.83px;top:386.97px;font-size:5.65px;color:#1a1a1a;letter-spacing:-0.194px">Replay</span>
<span class="t k" style="left:663.15px;top:387.87px;font-size:5.65px;color:#1a1a1a;letter-spacing:-0.095px">Back Two</span>
<span class="t k" style="left:746.41px;top:387.87px;font-size:5.65px;color:#1a1a1a;letter-spacing:-0.177px">Help</span>
<span class="t k" style="left:668.86px;top:409.17px;font-size:5.65px;color:#1a1a1a;letter-spacing:-0.087px">Back</span>
<span class="t k" style="left:747.25px;top:409.17px;font-size:5.65px;color:#1a1a1a">Exit</span>
<span class="t" style="left:11.25px;top:3.27px;font-size:6.3px;color:#f4f4f4;letter-spacing:-0.146px">Results--ADVISOR 2003-00-r0116</span>
<span class="t" style="left:3.4px;top:15.82px;font-size:6.0px;color:#0a0a0a;letter-spacing:-0.068px">File</span>
<span class="t" style="left:19.5px;top:15.82px;font-size:6.0px;color:#0a0a0a;letter-spacing:0.164px">Edit</span>
<span class="t" style="left:38px;top:15.82px;font-size:6.0px;color:#0a0a0a;letter-spacing:0.057px">Tools</span>
<span class="t" style="left:59.7px;top:15.82px;font-size:6.0px;color:#0a0a0a;letter-spacing:-0.054px">Units</span>
<span class="t" style="left:80px;top:15.82px;font-size:6.0px;color:#0a0a0a;letter-spacing:0.239px">Help</span>
<span class="t" style="left:46.2px;top:436.38px;font-size:7.7px;color:#e6e6e6;letter-spacing:-0.019px">Type here to search</span>
<span class="t" style="left:719px;top:436.65px;font-size:6.2px;color:#f0f0f0;letter-spacing:-0.474px">ENG</span>
<span class="t" style="left:745.6px;top:431.55px;font-size:6.2px;color:#f0f0f0;letter-spacing:-0.186px">23:11</span>
<span class="t" style="left:737.75px;top:441.3px;font-size:6.2px;color:#f0f0f0;letter-spacing:-0.041px">10-12-2020</span>
</div></body></html>
